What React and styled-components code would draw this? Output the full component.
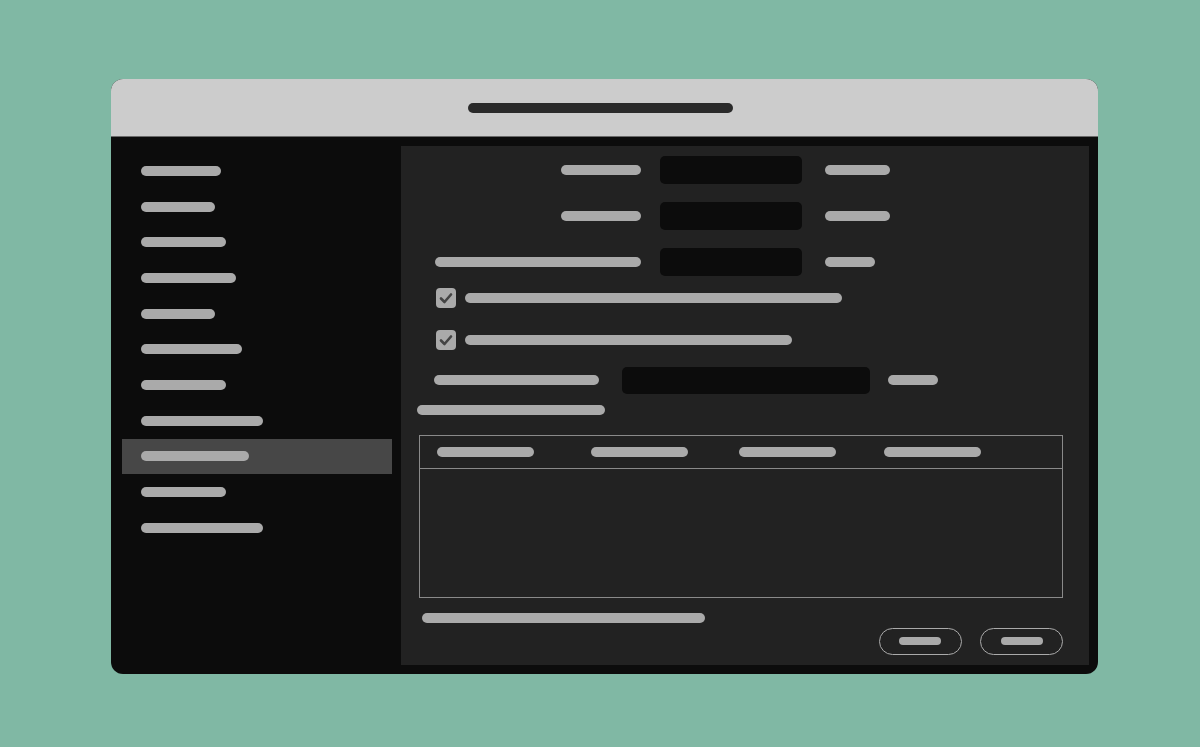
import React from "react";
import styled, { createGlobalStyle } from "styled-components";

const GlobalStyle = createGlobalStyle`
  html, body {
    margin: 0;
    padding: 0;
    background: #80b8a4;
    font-family: "Liberation Sans", Arial, sans-serif;
  }
`;

// widths of the placeholder bars in the sidebar
const navItems = [80, 74, 85, 95, 74, 101, 85, 122, 108, 85, 122];
const selectedIndex = 8;

const fieldRows = [
  { label: 80, hint: 65 },
  { label: 80, hint: 65 },
  { label: 206, hint: 50 },
];

const columns = [97, 97, 97, 97];

const CheckIcon = () => (
  <svg width="20" height="20" viewBox="0 0 20 20">
    <polyline
      points="5,10.5 8.5,14 15,6.5"
      fill="none"
      stroke="#444"
      strokeWidth="2.6"
      strokeLinecap="round"
      strokeLinejoin="round"
    />
  </svg>
);

const App = () => {
  return (
    <Page>
      <GlobalStyle />
      <Window>
        <TitleBar>
          <TitlePill />
        </TitleBar>
        <Body>
          <Sidebar>
            {navItems.map((w, i) => (
              <NavItem key={i} $selected={i === selectedIndex}>
                <Bar $w={w} />
              </NavItem>
            ))}
          </Sidebar>

          <Panel>
            {fieldRows.map((row, i) => (
              <FieldRow key={i} $top={i === 0 ? 10 : 18.6}>
                <LabelCell>
                  <Bar $w={row.label} />
                </LabelCell>
                <Input $w={142.5} />
                <Bar $w={row.hint} />
              </FieldRow>
            ))}

            <CheckRow $top={12.3}>
              <Checkbox>
                <CheckIcon />
              </Checkbox>
              <Bar $w={377} />
            </CheckRow>
            <CheckRow $top={22.3}>
              <Checkbox>
                <CheckIcon />
              </Checkbox>
              <Bar $w={327} />
            </CheckRow>

            <WideRow>
              <Bar $w={165} />
              <Input $w={248} />
              <Bar $w={50} />
            </WideRow>

            <SectionTitle>
              <Bar $w={188} />
            </SectionTitle>

            <Table>
              <TableHead>
                {columns.map((w, i) => (
                  <HeadCell key={i} $w={i === 0 ? 154 : i === 1 ? 148 : 145}>
                    <Bar $w={w} />
                  </HeadCell>
                ))}
              </TableHead>
              <TableBody />
            </Table>

            <StatusLine>
              <Bar $w={283} />
            </StatusLine>

            <Actions>
              <PillButton>
                <ButtonBar />
              </PillButton>
              <PillButton>
                <ButtonBar />
              </PillButton>
            </Actions>
          </Panel>
        </Body>
      </Window>
    </Page>
  );
};

export default App;

const Page = styled.div`
  width: 1200px;
  height: 747px;
  padding: 79px 0 0 111px;
  box-sizing: border-box;
`;

const Window = styled.div`
  width: 987px;
  height: 595px;
  border-radius: 12px;
  overflow: hidden;
  display: flex;
  flex-direction: column;
  background: #0c0c0c;
`;

const TitleBar = styled.div`
  height: 57px;
  flex-shrink: 0;
  background: #cccccc;
  border-bottom: 1px solid #6a6a6a;
  display: flex;
  align-items: center;
  justify-content: center;
  padding-right: 9px;
`;

const TitlePill = styled.div`
  width: 265px;
  height: 10px;
  border-radius: 5px;
  background: #2a2a2a;
`;

const Body = styled.div`
  flex: 1;
  display: flex;
  padding: 9px 9px 9px 0;
  min-height: 0;
`;

const Sidebar = styled.div`
  width: 290px;
  flex-shrink: 0;
  margin-top: -9px;
  padding: 16px 0 0 11px;
  box-sizing: border-box;
`;

const NavItem = styled.div`
  width: 270px;
  height: 35.7px;
  padding-left: 19px;
  box-sizing: border-box;
  display: flex;
  align-items: center;
  background: ${(p) => (p.$selected ? "#474747" : "transparent")};
`;

const Bar = styled.div`
  width: ${(p) => p.$w}px;
  height: 10px;
  border-radius: 5px;
  background: #aaaaaa;
  flex-shrink: 0;
`;

const Panel = styled.div`
  flex: 1;
  background: #222222;
  display: flex;
  flex-direction: column;
  min-width: 0;
`;

const FieldRow = styled.div`
  display: flex;
  align-items: center;
  margin-top: ${(p) => p.$top}px;
  padding-left: 33px;
  gap: 18.5px;

  & > *:last-child {
    margin-left: 4.5px;
  }
`;

const LabelCell = styled.div`
  width: 207px;
  display: flex;
  justify-content: flex-end;
`;

const Input = styled.div`
  width: ${(p) => p.$w}px;
  height: 27.5px;
  border-radius: 5px;
  background: #0c0c0c;
  flex-shrink: 0;
`;

const CheckRow = styled.div`
  display: flex;
  align-items: center;
  gap: 9.6px;
  margin-top: ${(p) => p.$top}px;
  padding-left: 34.7px;
`;

const Checkbox = styled.div`
  width: 20px;
  height: 20px;
  border-radius: 4px;
  background: #aaaaaa;
  display: flex;
`;

const WideRow = styled.div`
  display: flex;
  align-items: center;
  margin-top: 16.3px;
  padding-left: 33.3px;

  & > :nth-child(2) {
    margin-left: 22.7px;
  }
  & > :nth-child(3) {
    margin-left: 18px;
  }
`;

const SectionTitle = styled.div`
  margin-top: 11px;
  padding-left: 16px;
`;

const Table = styled.div`
  margin: 20.3px 0 0 18.3px;
  width: 644px;
  height: 163px;
  border: 1px solid #8a8a8a;
  box-sizing: border-box;
  display: flex;
  flex-direction: column;
`;

const TableHead = styled.div`
  height: 32px;
  border-bottom: 1px solid #8a8a8a;
  display: flex;
  align-items: center;
  padding-left: 16.5px;
`;

const HeadCell = styled.div`
  width: ${(p) => p.$w}px;
`;

const TableBody = styled.div`
  flex: 1;
`;

const StatusLine = styled.div`
  margin-top: 14.7px;
  padding-left: 21.3px;
`;

const Actions = styled.div`
  display: flex;
  justify-content: flex-end;
  gap: 18.6px;
  margin-top: 5px;
  padding-right: 25.7px;
`;

const PillButton = styled.div`
  width: 83px;
  height: 26.6px;
  border: 1.6px solid #aaaaaa;
  border-radius: 14px;
  box-sizing: border-box;
  display: flex;
  align-items: center;
  justify-content: center;
`;

const ButtonBar = styled.div`
  width: 42px;
  height: 8px;
  border-radius: 4px;
  background: #aaaaaa;
`;
